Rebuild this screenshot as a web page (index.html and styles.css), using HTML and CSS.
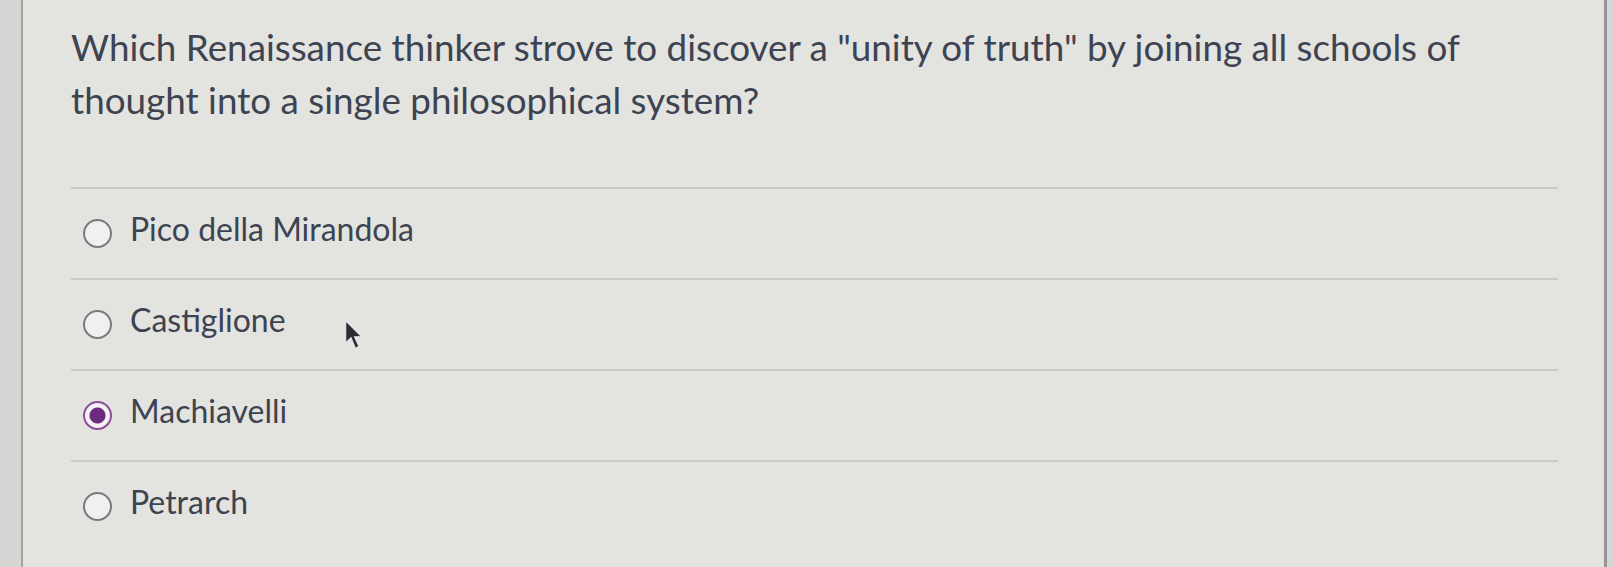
FILE: index.html
```html
<!DOCTYPE html>
<html>
<head>
<meta charset="utf-8">
<link rel="stylesheet" href="styles.css">
</head>
<body>
<div class="page">
  <div class="panel">
    <div class="question">Which Renaissance thinker strove to discover a "unity of truth" by joining all schools of thought into a single philosophical system?</div>
    <div class="answers">
      <div class="answer"><span class="radio"></span><span class="label">Pico della Mirandola</span></div>
      <div class="answer"><span class="radio"></span><span class="label">Castiglione</span></div>
      <div class="answer"><span class="radio checked"></span><span class="label">Machiavelli</span></div>
      <div class="answer"><span class="radio"></span><span class="label">Petrarch</span></div>
    </div>
    <svg class="cursor" width="21" height="32" viewBox="0 0 24 36">
      <path d="M2 2 L2 27 L8 21 L13 33 L17 31 L12 20 L20 20 Z" fill="#2a2d38" stroke="#e8e8e8" stroke-width="1.2"/>
    </svg>
  </div>
</div>
</body>
</html>
```
FILE: styles.css
```css
html, body {
  margin: 0;
  padding: 0;
}
body {
  background: #d6d6d4;
  overflow: hidden;
}
.page {
  display: flex;
  width: 1613px;
  height: 567px;
  padding-left: 21px;
  box-sizing: border-box;
}
.panel {
  position: relative;
  flex: none;
  width: 1586px;
  height: 567px;
  box-sizing: border-box;
  background: #e3e3e0;
  border-left: 2px solid #a4a4a8;
  border-right: 3px solid #94949a;
  padding: 21px 0 0 48px;
  font-family: Lato, "Noto Sans", sans-serif;
  color: #3d4350;
}
.question {
  font-size: 36.8px;
  line-height: 53px;
  width: 1420px;
  margin-bottom: 60px;
}
.answers {
  width: 1487px;
  border-top: 2px solid #c9c9c8;
}
.answer {
  display: flex;
  align-items: center;
  height: 89px;
  border-bottom: 2px solid #c9c9c8;
  padding-left: 12px;
}
.answer:last-child {
  border-bottom: none;
}
.radio {
  width: 25px;
  height: 25px;
  border: 2px solid #7a7b80;
  border-radius: 50%;
  background: #f0f0ee;
  margin-right: 18px;
  flex: none;
}
.radio.checked {
  border-color: #8a4f96;
  background: radial-gradient(circle, #6c2a7e 0 7.5px, #f4f0f4 8.5px);
}
.label {
  font-size: 32px;
  line-height: 36px;
  margin-bottom: 10px;
}
.cursor {
  position: absolute;
  left: 321px;
  top: 319px;
}
```
